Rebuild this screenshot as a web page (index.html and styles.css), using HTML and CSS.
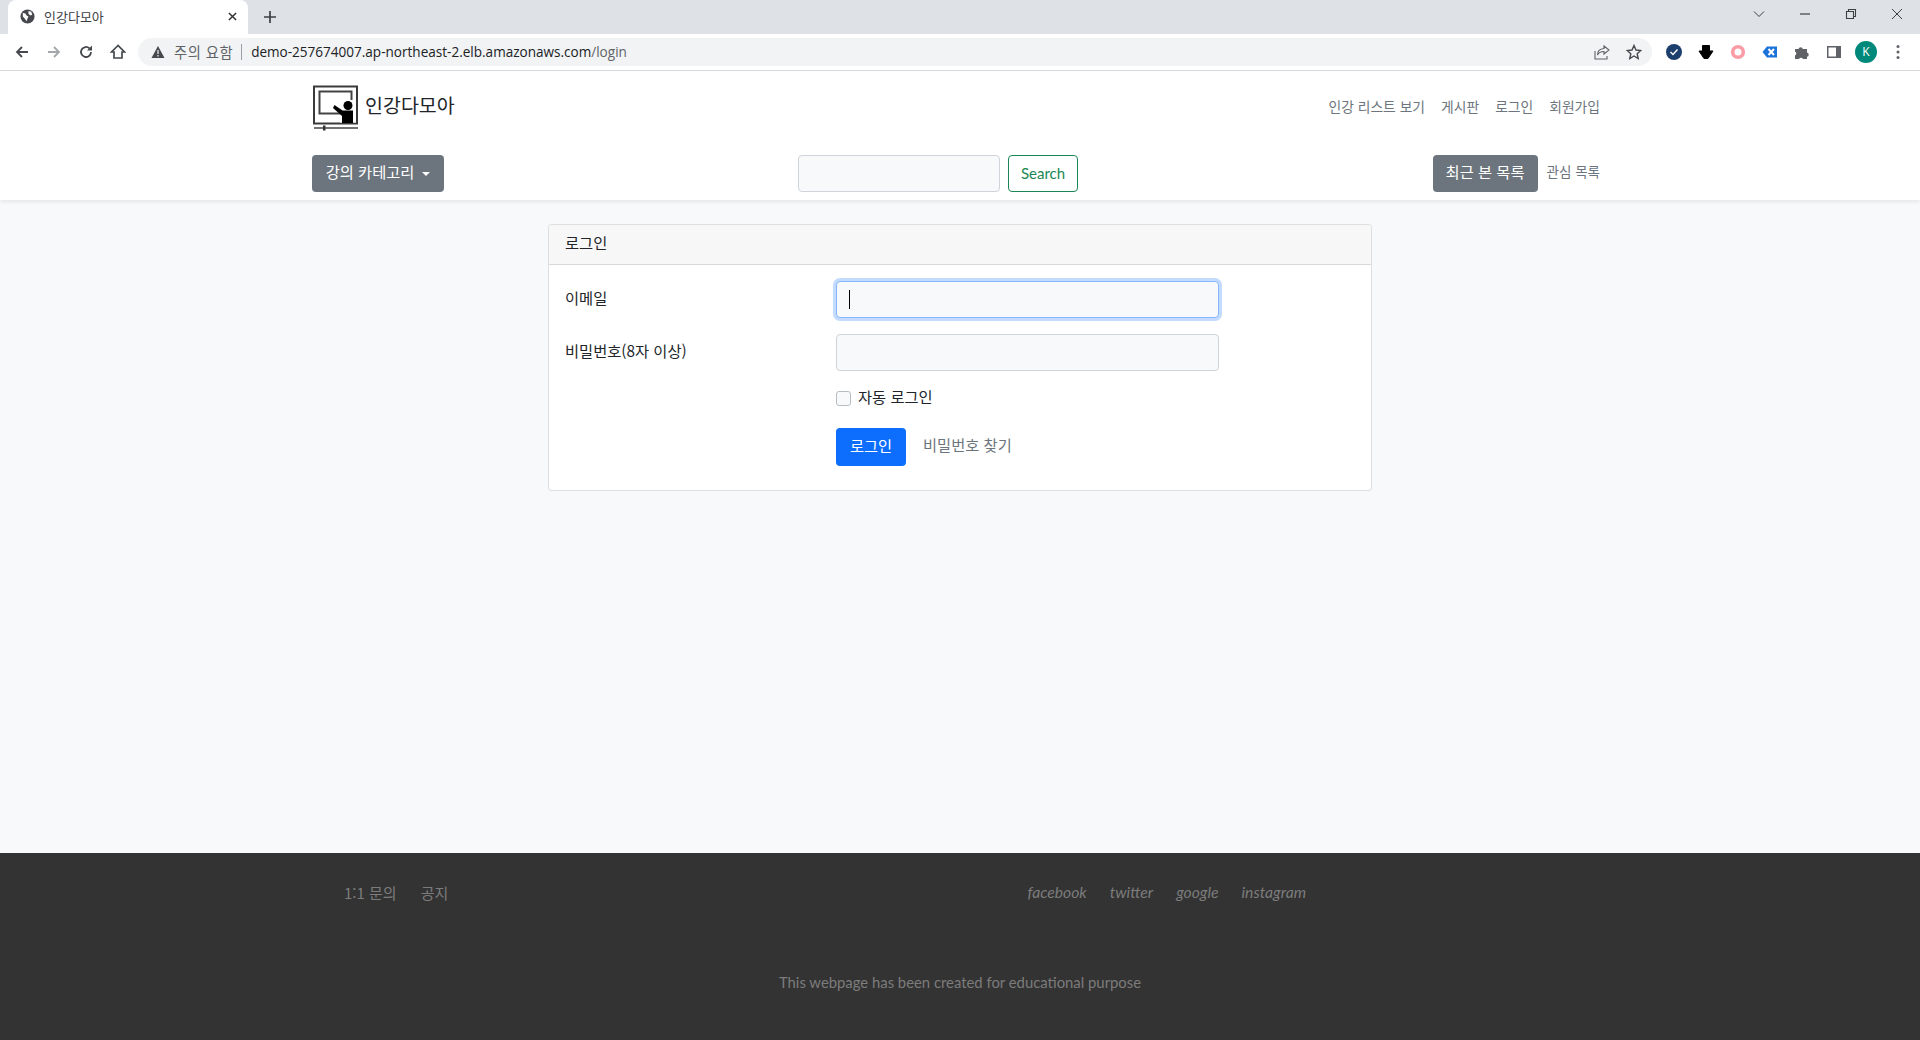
FILE: index.html
```html
<!DOCTYPE html>
<html lang="ko">
<head>
<meta charset="utf-8">
<title>인강다모아</title>
<link rel="stylesheet" href="styles.css">
</head>
<body>
<div class="tabstrip">
  <div class="tab">
    <svg class="favicon" viewBox="0 0 16 16"><circle cx="8" cy="8" r="7.500" fill="#45494e"/><path d="M3 4l3 1 1 2 2 1-1 2 -1 3-2-3-2-2zM9 2l3 1 1 3-2 1-2-2z" fill="#fff"/></svg>
    <span class="tab-title">인강다모아</span>
    <svg class="tab-close" viewBox="0 0 10 10"><path d="M1 1l8 8M9 1l-8 8" stroke="#2c2f33" stroke-width="1.6"/></svg>
  </div>
  <svg class="newtab" viewBox="0 0 12 12"><path d="M6 0v12M0 6h12" stroke="#3c4043" stroke-width="1.7"/></svg>
  <div class="winctl">
    <svg class="win-ico" viewBox="0 0 12 12"><path d="M1 3.500l5 5 5-5" fill="none" stroke="#3c4043" stroke-width="1"/></svg>
    <svg class="win-ico" viewBox="0 0 12 12"><path d="M1 6h10" stroke="#3c4043" stroke-width="1.200"/></svg>
    <svg class="win-ico" viewBox="0 0 12 12"><path d="M1.500 3.500h7v7h-7zM3.500 3.500v-2h7v7h-2" fill="none" stroke="#3c4043" stroke-width="1.100"/></svg>
    <svg class="win-ico" viewBox="0 0 12 12"><path d="M1 1l10 10M11 1L1 11" stroke="#3c4043" stroke-width="1"/></svg>
  </div>
</div>
<div class="toolbar">
  <svg class="tool" viewBox="0 0 16 16"><path d="M14 8H3M8 3L3 8l5 5" fill="none" stroke="#45494e" stroke-width="1.800"/></svg>
  <svg class="tool" viewBox="0 0 16 16"><path d="M2 8h11M8 3l5 5-5 5" fill="none" stroke="#a4a7ab" stroke-width="1.800"/></svg>
  <svg class="tool" viewBox="0 0 16 16"><path d="M13 8a5 5 0 1 1-1.500-3.600" fill="none" stroke="#45494e" stroke-width="1.800"/><path d="M14 1.500v5h-5z" fill="#45494e"/></svg>
  <svg class="tool" viewBox="0 0 16 16"><path d="M8 1.500L1.500 8H4v6h8V8h2.500z" fill="none" stroke="#45494e" stroke-width="1.700"/></svg>
  <div class="omnibox">
    <svg class="warn" viewBox="0 0 14 14"><path d="M7 1l6.500 12H.5z" fill="#45494e"/><path d="M7 5v4M7 10v1.500" stroke="#f1f3f4" stroke-width="1.200"/></svg>
    <span class="warn-text">주의 요함</span>
    <span class="omni-sep"></span>
    <span class="url">demo-257674007.ap-northeast-2.elb.amazonaws.com<span class="url-path">/login</span></span>
    <svg class="omni-ico share" viewBox="0 0 16 16"><path d="M10 2l5 4-5 4V7.500C6.500 7.500 4.500 9 3.500 11 3.500 7 6 4.800 10 4.500zM1 7v8h12v-3" fill="none" stroke="#5f6368" stroke-width="1.100"/></svg>
    <svg class="omni-ico" viewBox="0 0 16 16"><path d="M8 1.500l2 4.500 4.800.5-3.600 3.200 1 4.800L8 12l-4.200 2.500 1-4.800L1.200 6.500 6 6z" fill="none" stroke="#45494e" stroke-width="1.400"/></svg>
  </div>
  <div class="extensions">
    <svg class="ext" viewBox="0 0 16 16"><circle cx="8" cy="8" r="8" fill="#1c3f6e"/><path d="M4.500 8l2.500 2.500 4.500-5" fill="none" stroke="#fff" stroke-width="1.400"/></svg>
    <svg class="ext" viewBox="0 0 16 16"><path d="M4.500 1.500h7V7H15l-5 7.500H6L1 7h3.500z" fill="#000" stroke="#000" stroke-linejoin="round"/></svg>
    <svg class="ext" viewBox="0 0 16 16"><circle cx="8" cy="8" r="5.300" fill="none" stroke="#fb9ba6" stroke-width="3.600"/></svg>
    <svg class="ext" viewBox="0 0 16 16"><path d="M5 2.500h10v11H5L.5 8z" fill="#1a73d8"/><path d="M6.500 5l5.500 6M12 5l-5.500 6" stroke="#fff" stroke-width="2"/></svg>
    <svg class="ext ext-puzzle" viewBox="0 0 16 16"><path d="M2 5h3.500a2.200 2.200 0 0 1 4.300 0H14v3.500a2.200 2.200 0 0 1 0 4.300V15H10a2.200 2.200 0 0 0-4 0H2v-3.500a2.200 2.200 0 0 0 0-4z" fill="#5f6368"/></svg>
    <svg class="ext" viewBox="0 0 16 16"><path d="M1 2h14v12H1z" fill="#5f6368"/><path d="M2.500 3.500h7.500v9H2.500z" fill="#fff"/></svg>
    <span class="avatar">K</span>
    <svg class="dots" viewBox="0 0 4 16"><circle cx="2" cy="2.500" r="1.500" fill="#5f6368"/><circle cx="2" cy="8" r="1.500" fill="#5f6368"/><circle cx="2" cy="13.500" r="1.500" fill="#5f6368"/></svg>
  </div>
</div>

<header class="site-header">
  <div class="header-top">
    <a class="brand">
      <svg class="logo" viewBox="0 0 46 46">
        <rect x="1" y="1.500" width="43" height="37" fill="none" stroke="#3a3a3a" stroke-width="2"/>
        <rect x="6.500" y="6.500" width="32" height="22" fill="none" stroke="#444" stroke-width="2"/>
        <rect x="27" y="15" width="16" height="22.500" fill="#fff"/>
        <circle cx="35" cy="20.500" r="4.500" fill="#000"/>
        <path d="M21.500 20l8 5.500h10.500v12.500H29V31l-9-8z" fill="#000"/>
        <path d="M1 43h44" stroke="#444" stroke-width="1.600"/>
        <rect x="10" y="40.500" width="2.500" height="5" fill="#333"/>
      </svg>
      <span class="brand-name">인강다모아</span>
    </a>
    <nav class="top-nav">
      <a>인강 리스트 보기</a>
      <a>게시판</a>
      <a>로그인</a>
      <a>회원가입</a>
    </nav>
  </div>
  <div class="header-bottom">
    <button class="btn btn-gray btn-cat">강의 카테고리<span class="caret"></span></button>
    <form class="search">
      <input class="form-input search-input" type="text">
      <button class="btn btn-search" type="button">Search</button>
    </form>
    <div class="recent">
      <button class="btn btn-gray btn-recent">최근 본 목록</button>
      <a class="fav-link">관심 목록</a>
    </div>
  </div>
</header>

<main class="content">
  <section class="card">
    <div class="card-header">로그인</div>
    <div class="card-body">
      <div class="row row-email">
        <label class="row-label">이메일</label>
        <div class="fake-focus"><span class="cursor"></span></div>
      </div>
      <div class="row row-pass">
        <label class="row-label">비밀번호(8자 이상)</label>
        <input class="form-input pass-input" type="password">
      </div>
      <div class="row row-check">
        <span class="row-label"></span>
        <label class="check"><input class="checkbox" type="checkbox"><span class="check-text">자동 로그인</span></label>
      </div>
      <div class="row row-actions">
        <span class="row-label"></span>
        <button class="btn btn-primary" type="button">로그인</button>
        <a class="find-pass">비밀번호 찾기</a>
      </div>
    </div>
  </section>
</main>

<footer class="site-footer">
  <div class="footer-links">
    <div class="footer-left"><a>1:1 문의</a><a>공지</a></div>
    <div class="footer-social"><a>facebook</a><a>twitter</a><a>google</a><a>instagram</a></div>
  </div>
  <p class="footer-note">This webpage has been created for educational purpose</p>
</footer>
</body>
</html>
```
FILE: styles.css
```css
* { box-sizing: border-box; }
html, body { margin: 0; height: 100%; }
body {
  display: flex;
  flex-direction: column;
  height: 1040px;
  overflow: hidden;
  background: #f8f9fa;
  color: #212529;
  font-family: "Lato", "Noto Sans CJK KR", sans-serif;
  font-size: 15px;
}
a { color: inherit; text-decoration: none; }

/* browser chrome */
.tabstrip {
  display: flex;
  align-items: flex-start;
  flex: 0 0 34px;
  height: 34px;
  padding-left: 8px;
  background: #dee1e6;
}
.tab {
  display: flex;
  align-items: center;
  width: 240px;
  height: 34px;
  padding: 0 11px 1px 12px;
  background: #fff;
  border-radius: 8px 8px 0 0;
}
.favicon { width: 15px; height: 15px; margin-right: 9px; }
.tab-title { flex: 1; font: 13px "Noto Sans CJK KR", sans-serif; color: #3c4043; }
.tab-close { width: 9px; height: 9px; }
.newtab { width: 12px; height: 12px; margin: 11px 0 0 16px; }
.winctl { display: flex; margin-left: auto; padding-top: 8px; padding-right: 17px; gap: 34px; }
.win-ico { width: 12px; height: 12px; }

.toolbar {
  display: flex;
  align-items: center;
  flex: 0 0 37px;
  height: 37px;
  padding: 0 0 1px 14px;
  background: #fff;
  border-bottom: 1px solid #d9dbde;
}
.tool { width: 16px; height: 16px; margin-right: 16px; }
.tool:nth-child(4) { margin-right: 14px; }
.omnibox {
  display: flex;
  align-items: center;
  flex: 0 0 1514px;
  height: 28px;
  padding: 0 10px 0 13px;
  margin-left: -2px;
  background: #f1f3f4;
  border-radius: 14px;
}
.warn { width: 14px; height: 14px; margin-right: 9px; }
.warn-text { font: 14.300px "Noto Sans CJK KR", sans-serif; letter-spacing: .5px; color: #5f6368; }
.omni-sep { width: 1px; height: 16px; margin: 0 9px 0 8px; background: #9aa0a6; }
.url { flex: 1; font: 13.550px "Open Sans", sans-serif; color: #202124; }
.url-path { color: #5f6368; }
.omni-ico { width: 16px; height: 16px; }
.share { margin-right: 16px; }
.extensions { display: flex; align-items: center; margin-left: 14px; gap: 16px; }
.ext { width: 16px; height: 16px; }
.ext-puzzle { margin-left: -1px; margin-right: 1px; }
.avatar {
  display: flex;
  align-items: center;
  justify-content: center;
  width: 22px;
  height: 22px;
  margin-left: -3px;
  border-radius: 50%;
  background: #00897b;
  color: #fff;
  font: 12px "Open Sans", sans-serif;
}
.dots { width: 4px; height: 16px; margin-left: 3px; }

/* site header */
.site-header {
  flex: 0 0 129px;
  height: 129px;
  padding: 0 320px 0 312px;
  background: #fff;
  box-shadow: 0 2px 4px rgba(0, 0, 0, .075);
  position: relative;
}
.header-top {
  display: flex;
  align-items: flex-start;
  justify-content: space-between;
  height: 84px;
  padding-top: 14px;
}
.brand { display: flex; align-items: center; margin-left: 1px; color: #212529; }
.logo { width: 46px; height: 46px; }
.brand-name { margin: -8px 0 0 6px; font: 19.500px "Noto Sans CJK KR", sans-serif; color: #212529; }
.top-nav {
  display: flex;
  gap: 16px;
  margin-top: 12px;
  color: #6c757d;
  font-family: "Noto Sans CJK KR", sans-serif;
  font-size: 13.800px;
  line-height: 19px;
}
.header-bottom { display: grid; grid-template-columns: 486px 1fr auto; align-items: center; }
.btn {
  height: 37px;
  border: 1px solid transparent;
  border-radius: 4px;
  font-family: "Noto Sans CJK KR", sans-serif;
  font-size: 15.300px;
  line-height: 30px;
  cursor: pointer;
}
.btn-gray { background: #6c757d; color: #fff; }
.btn-cat { width: 132px; padding: 0 0 6px; display: flex; align-items: center; justify-content: center; }
.caret {
  margin: 6px 0 0 8px;
  border-top: 4px solid #fff;
  border-left: 4px solid transparent;
  border-right: 4px solid transparent;
}
.search { display: flex; gap: 8px; }
.form-input {
  height: 37px;
  border: 1px solid #ced4da;
  border-radius: 4px;
  background: #f8f9fa;
  outline: none;
}
.search-input { width: 202px; }
.btn-search {
  width: 70px;
  padding: 0 0 2px;
  background: #fff;
  border-color: #198754;
  color: #198754;
  font-family: "Lato", sans-serif;
  font-size: 15px;
}
.recent { display: flex; align-items: center; gap: 9px; }
.btn-recent { width: 105px; padding: 0 0 6px; }
.fav-link {
  margin-top: -5px;
  color: #6c757d;
  font: 13.500px "Noto Sans CJK KR", sans-serif;
}

/* login card */
.content { flex: 1; padding-top: 24px; }
.card {
  width: 824px;
  height: 267px;
  margin: 0 auto;
  background: #fff;
  border: 1px solid rgba(0, 0, 0, .125);
  border-radius: 4px;
  font-family: "Noto Sans CJK KR", sans-serif;
  font-size: 15.300px;
}
.card-header {
  height: 40px;
  padding-left: 16px;
  line-height: 34px;
  background: #f7f7f7;
  border-bottom: 1px solid rgba(0, 0, 0, .125);
  border-radius: 3px 3px 0 0;
}
.card-body { padding: 16px 0 0 16px; }
.row { display: flex; }
.row-label { flex: 0 0 271px; line-height: 32px; }
.row-email { height: 53px; }
.fake-focus {
  display: flex;
  align-items: center;
  width: 383px;
  height: 37px;
  padding-left: 12px;
  background: #f8f9fa;
  border: 1px solid #86b7fe;
  border-radius: 4px;
  box-shadow: 0 0 0 3px rgba(13, 110, 253, .25);
}
.cursor { width: 1px; height: 19px; background: #000; }
.row-pass { height: 53px; }
.pass-input { width: 383px; }
.row-check { height: 41px; }
.check { display: flex; align-items: center; height: 20px; }
.checkbox {
  appearance: none;
  width: 15px;
  height: 15px;
  margin: 2px 7px 0 0;
  background: #f8f9fa;
  border: 1px solid #b8bdc2;
  border-radius: 3px;
}
.check-text { margin-top: -2px; }
.row-actions { align-items: center; }
.btn-primary { width: 70px; height: 38px; padding: 0 0 5px; background: #0d6efd; color: #fff; }
.find-pass { margin: -6px 0 0 17px; color: #6c757d; }

/* footer */
.site-footer {
  flex: 0 0 187px;
  height: 187px;
  padding-top: 30px;
  background: #333;
  color: #7c7c7c;
}
.footer-links { display: flex; justify-content: space-between; padding: 0 614px 0 344px; }
.footer-left { display: flex; gap: 24px; font-family: "Noto Sans CJK KR", sans-serif; margin-top: -1px; }
.footer-social { display: flex; gap: 23px; font-size: 15.700px; font-style: italic; }
.footer-note { margin: 70px 0 0; font-size: 14.850px; text-align: center; }
```
